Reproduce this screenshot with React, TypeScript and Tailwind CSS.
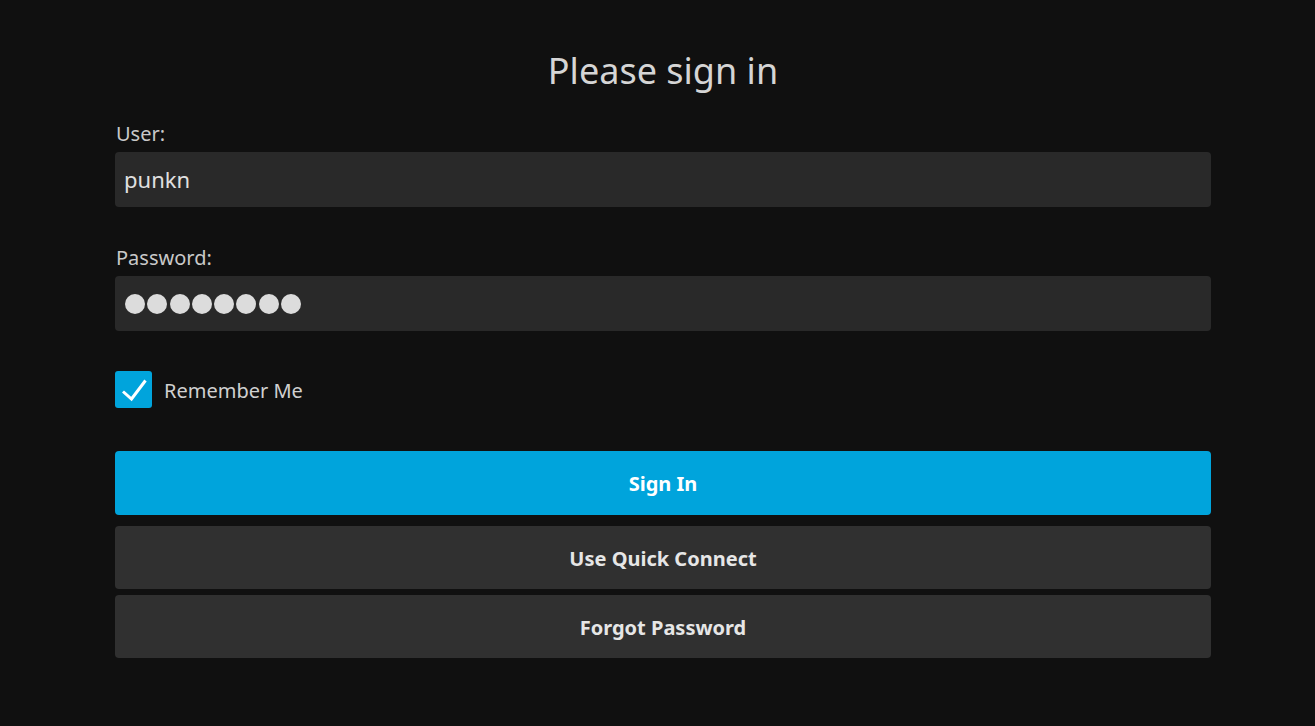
import React from "react";

export default function App() {
  const font = { fontFamily: '"Noto Sans", "Open Sans", sans-serif' };
  return (
    <div
      className="w-[1315px] h-[726px] bg-[#101010] overflow-hidden"
      style={font}
    >
      <div className="ml-[115px] w-[1096px] flex flex-col">
        <h1 className="mt-[49px] h-[44px] leading-[44px] text-center text-[36px] font-normal text-[#d5d5d5]">
          Please sign in
        </h1>

        <label className="mt-[29px] h-[24px] leading-[24px] text-[20px] text-[#c9c9c9] pl-px">
          User:
        </label>
        <div className="mt-[6px] h-[55px] rounded-[4px] bg-[#292929] flex items-center pl-[9px] text-[22px] text-[#e0e0e0]">
          punkn
        </div>

        <label className="mt-[39px] h-[24px] leading-[24px] text-[20px] text-[#c9c9c9] pl-px">
          Password:
        </label>
        <div className="mt-[6px] h-[55px] rounded-[4px] bg-[#292929] flex items-center pl-[10px] gap-[2.3px]">
          {Array.from({ length: 8 }).map((_, i) => (
            <span key={i} className="w-[20px] h-[20px] rounded-full bg-[#dcdcdc]" />
          ))}
        </div>

        <div className="mt-[40px] h-[37px] flex items-center gap-[12px]">
          <div className="w-[37px] h-[37px] rounded-[3px] bg-[#00a4dc] flex items-center justify-center">
            <svg width="37" height="37" viewBox="0 0 37 37">
              <polyline
                points="8,20.5 16.5,28 30.5,9.5"
                fill="none"
                stroke="#ffffff"
                strokeWidth="3"
                strokeLinecap="butt"
                strokeLinejoin="miter"
              />
            </svg>
          </div>
          <span className="pt-[3px] text-[20px] text-[#d0d0d0]">Remember Me</span>
        </div>

        <button className="mt-[43px] h-[64px] pt-[2px] rounded-[4px] bg-[#00a4dc] text-white text-[20px] font-bold">
          Sign In
        </button>
        <button className="mt-[11px] h-[63px] pt-[2px] rounded-[4px] bg-[#303030] text-[#e6e6e6] text-[20px] font-bold">
          Use Quick Connect
        </button>
        <button className="mt-[6px] h-[63px] pt-[2px] rounded-[4px] bg-[#303030] text-[#e6e6e6] text-[20px] font-bold">
          Forgot Password
        </button>
      </div>
    </div>
  );
}
